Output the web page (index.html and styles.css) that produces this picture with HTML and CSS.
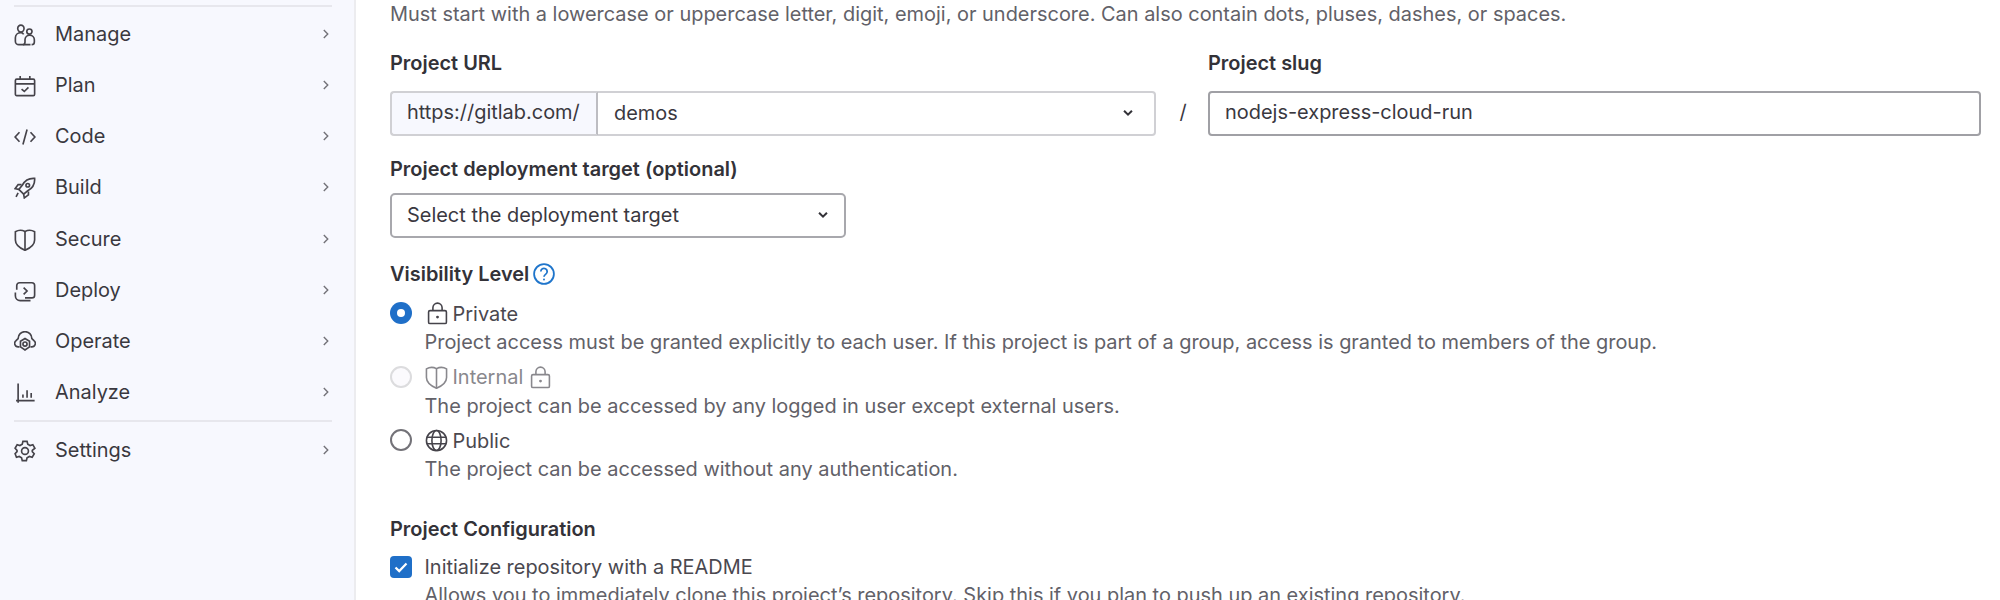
FILE: index.html
```html
<!DOCTYPE html>
<html lang="en">
<head>
<meta charset="utf-8">
<title>New project</title>
<link rel="stylesheet" href="styles.css">
</head>
<body>
<div class="page">
  <aside class="sidebar">
    <hr class="rule first">
    <nav class="nav">
      <a class="item"><svg class="ic" viewBox="0 0 16 16"><ellipse cx="5" cy="3.300" rx="2.300" ry="2.500"/><path d="M7 7.500C6.400 6.500 5.800 6.300 5 6.300c-2.200 0-4 1.500-4 3.700v2.500A2.500 2.500 0 0 0 3.500 15H12"/><circle cx="11.200" cy="5.500" r="1.900"/><path d="M6.500 15c1 0 1.500-1 1.500-2v-1.500a3.300 3.300 0 0 1 6.800 0V13a2 2 0 0 1-2 2"/></svg><span>Manage</span><svg class="chev" viewBox="0 0 16 16"><path d="M5.500 3.500 10 8l-4.500 4.500"/></svg></a>
      <a class="item"><svg class="ic" viewBox="0 0 16 16"><rect x="1" y="3" width="14" height="12" rx="1"/><path d="M1 6.500h14M4.500 .8V3M11.500 .8V3M5.500 10.300l2 1.700 3-3"/></svg><span>Plan</span><svg class="chev" viewBox="0 0 16 16"><path d="M5.500 3.500 10 8l-4.500 4.500"/></svg></a>
      <a class="item"><svg class="ic" viewBox="0 0 16 16"><path d="M4 4.500.8 8 4 11.500M12 4.500 15.200 8 12 11.500M9.500 2.500l-3 11"/></svg><span>Code</span><svg class="chev" viewBox="0 0 16 16"><path d="M5.500 3.500 10 8l-4.500 4.500"/></svg></a>
      <a class="item"><svg class="ic" viewBox="0 0 16 16"><path d="M15 1c-4-.3-7 1.300-9 5L3.500 9l3.500 3.500 3-2.500c3.700-2 5.300-5 5-9z"/><circle cx="10" cy="6" r="1.300"/><path d="M5.500 5.500H3L.8 8.500 3.500 9M10.500 10.500V13l-3 2.200L7 12.500M3 11.500l-1.500 3"/></svg><span>Build</span><svg class="chev" viewBox="0 0 16 16"><path d="M5.500 3.500 10 8l-4.500 4.500"/></svg></a>
      <a class="item"><svg class="ic" viewBox="0 0 16 16"><path d="M8 1.800C10 .8 13 .8 15 2v6c0 3.500-3.500 6-7 7.500C4.500 14 1 11.500 1 8V2c2-1.200 5-1.200 7-.2z"/><path d="M8 1.800v13.700"/></svg><span>Secure</span><svg class="chev" viewBox="0 0 16 16"><path d="M5.500 3.500 10 8l-4.500 4.500"/></svg></a>
      <a class="item"><svg class="ic" viewBox="0 0 16 16"><path d="M2 7V4a2 2 0 0 1 2-2h9a2 2 0 0 1 2 2v7a2 2 0 0 1-2 2H8"/><path d="M1 9v2.500C1 13.500 2.500 15 4.500 15H12"/><path d="M7 5.500 9.500 8 7 10.500"/></svg><span>Deploy</span><svg class="chev" viewBox="0 0 16 16"><path d="M5.500 3.500 10 8l-4.500 4.500"/></svg></a>
      <a class="item"><svg class="ic" viewBox="0 0 16 16"><path d="M4 11.500H3a2.500 2.500 0 0 1-1.500-4.500L3 5.500a5 5 0 0 1 10 0L14.500 7A2.500 2.500 0 0 1 13 11.500h-1"/><circle cx="8" cy="9.500" r="1.500"/><path d="M8 5.500l3.300 2v4L8 13.800l-3.300-2.300v-4z"/></svg><span>Operate</span><svg class="chev" viewBox="0 0 16 16"><path d="M5.500 3.500 10 8l-4.500 4.500"/></svg></a>
      <a class="item"><svg class="ic" viewBox="0 0 16 16"><path d="M1.500 13.500H15M3 1v14M6.500 9v2.500M9.500 6v5.500M12.500 8v3.500"/></svg><span>Analyze</span><svg class="chev" viewBox="0 0 16 16"><path d="M5.500 3.500 10 8l-4.500 4.500"/></svg></a>
    </nav>
    <hr class="rule second">
    <a class="item"><svg class="ic" viewBox="0 0 16 16"><path d="M6.500 1h3l.5 2 1.700 1 2-.6 1.500 2.600L13.300 7.500v1L14.700 10l-1.500 2.600-2-.6-1.700 1-.5 2h-3l-.5-2-1.700-1-2 .6L.8 10l1.400-1.500v-1L.8 6l1.500-2.600 2 .6L6 3z"/><circle cx="8" cy="8" r="2.500"/></svg><span>Settings</span><svg class="chev" viewBox="0 0 16 16"><path d="M5.500 3.500 10 8l-4.500 4.500"/></svg></a>
  </aside>
  <main class="main">
    <p class="help top">Must start with a lowercase or uppercase letter, digit, emoji, or underscore. Can also contain dots, pluses, dashes, or spaces.</p>
    <div class="url-row">
      <div class="url-col">
        <label class="label">Project URL</label>
        <div class="group">
          <span class="addon">https://gitlab.com/</span>
          <span class="select joined"><span>demos</span><svg class="down" viewBox="0 0 16 16"><path d="M4.500 6 8 9.500 11.500 6"/></svg></span>
        </div>
      </div>
      <span class="slash">/</span>
      <div class="slug-col">
        <label class="label">Project slug</label>
        <div class="input">nodejs-express-cloud-run</div>
      </div>
    </div>
    <label class="label target-label">Project deployment target (optional)</label>
    <div class="select target"><span>Select the deployment target</span><svg class="down" viewBox="0 0 16 16"><path d="M4.500 6 8 9.500 11.500 6"/></svg></div>
    <div class="label vis-label">Visibility Level<svg class="q" viewBox="0 0 16 16"><circle cx="8" cy="8" r="7.200"/><path d="M5.700 6.200a2.300 2.300 0 1 1 3.600 1.900C8.500 8.700 8 9.100 8 10"/><circle class="dot" cx="8" cy="12" r=".7"/></svg></div>
    <div class="option">
      <span class="radio on"></span>
      <div class="opt-body">
        <div class="opt-title"><svg class="oi lock" viewBox="0 0 16 16"><rect x="1.800" y="6" width="12.400" height="9" rx="1"/><path d="M4.800 6V4a3.200 3.200 0 0 1 6.400 0v2"/><circle class="dot" cx="8" cy="10.500" r="1"/></svg>Private</div>
        <p class="help">Project access must be granted explicitly to each user. If this project is part of a group, access is granted to members of the group.</p>
      </div>
    </div>
    <div class="option">
      <span class="radio off"></span>
      <div class="opt-body">
        <div class="opt-title muted"><svg class="oi" viewBox="0 0 16 16"><path d="M8 1.800C10 .8 13 .8 15 2v6c0 3.500-3.500 6-7 7.500C4.500 14 1 11.500 1 8V2c2-1.200 5-1.200 7-.2z"/><path d="M8 1.800v13.700"/></svg>Internal<svg class="oi after" viewBox="0 0 16 16"><rect x="1.800" y="6" width="12.400" height="9" rx="1"/><path d="M4.800 6V4a3.200 3.200 0 0 1 6.400 0v2"/><circle class="dot" cx="8" cy="10.500" r="1"/></svg></div>
        <p class="help">The project can be accessed by any logged in user except external users.</p>
      </div>
    </div>
    <div class="option">
      <span class="radio"></span>
      <div class="opt-body">
        <div class="opt-title"><svg class="oi" viewBox="0 0 16 16"><circle cx="8" cy="8" r="7"/><ellipse cx="8" cy="8" rx="3.200" ry="7"/><path d="M1.300 5.700h13.400M1.300 10.300h13.400"/></svg>Public</div>
        <p class="help">The project can be accessed without any authentication.</p>
      </div>
    </div>
    <div class="label conf-label">Project Configuration</div>
    <div class="option check-opt">
      <span class="check"><svg viewBox="0 0 16 16"><path d="M4 8.300l2.700 2.700L12 5.500"/></svg></span>
      <div class="opt-body">
        <div class="opt-title">Initialize repository with a README</div>
        <p class="help">Allows you to immediately clone this project’s repository. Skip this if you plan to push up an existing repository.</p>
      </div>
    </div>
  </main>
</div>
</body>
</html>
```
FILE: styles.css
```css
* { box-sizing: border-box; }
html, body { margin: 0; height: 600px; overflow: hidden; background: #fff; }
body { font-family: Inter, "Liberation Sans", sans-serif; font-size: 19.950px; color: #3a383f; }
.page { display: flex; height: 600px; }
.sidebar { width: 356px; flex: none; background: #f7f8fe; border-right: 2px solid #ececef; padding: 5px 0 0 14px; }
.rule { border: 0; height: 2px; background: #e7e7ed; margin: 0; width: 318px; }
.rule.first { margin-bottom: 1.400px; }
.nav { display: flex; flex-direction: column; }
.rule.second { margin: 2.500px 0 2px; }
.item { display: flex; align-items: center; width: 318px; height: 51px; color: #3a383f; flex: none; }
.nav .item { margin-bottom: .2px; }
.item span { flex: 1; margin-left: 19px; line-height: 24px; }
.ic { width: 22px; height: 22px; fill: none; stroke: #45434a; stroke-width: 1.200; flex: none; margin-top: 2px; }
.chev { width: 14px; height: 14px; fill: none; stroke: #737278; stroke-width: 1.600; flex: none; margin-right: -1px; }
.main { flex: 1; padding-left: 34px; padding-right: 19px; }
.help { margin: 0; color: #626168; line-height: 24px; }
.help.top { margin-top: 2px; height: 24px; }
.label { display: block; font-weight: 600; color: #333238; line-height: 24px; }
.url-row { display: flex; margin-top: 25px; }
.url-col { width: 766px; flex: none; }
.slash { width: 52px; flex: none; text-align: center; margin-top: 40px; padding-left: 2px; line-height: 43px; color: #3a383f; }
.slug-col { flex: 1; }
.group { display: flex; height: 45px; margin-top: 16px; }
.addon { width: 208px; flex: none; padding-left: 15px; background: #f7f8fe; border: 2px solid #d0d0d4; border-right-color: #bdbdc2; border-radius: 4px 0 0 4px; line-height: 39px; color: #3a383f; }
.select { display: flex; align-items: center; justify-content: space-between; height: 45px; padding: 0 12px 2px 15px; background: #fff; border: 2px solid #a8a8ad; border-radius: 5px; color: #3a383f; }
.select.joined { flex: 1; border: 2px solid #d0d0d4; border-left: 0; border-radius: 0 4px 4px 0; padding-left: 16px; padding-right: 17px; }
.down { width: 18px; height: 18px; fill: none; stroke: #333238; stroke-width: 1.800; }
.input { height: 45px; margin-top: 16px; padding: 0 15px; border: 2px solid #a0a0a5; border-radius: 4px; line-height: 39px; color: #3a383f; }
.target-label { margin-top: 21px; }
.target { width: 456px; margin-top: 12px; }
.vis-label { display: flex; align-items: center; gap: 4px; margin-top: 24px; }
.q { width: 22px; height: 22px; fill: none; stroke: #1f75cb; stroke-width: 1.300; }
.dot { fill: currentColor; stroke: none; }
.q .dot { fill: #1f75cb; }
.option { display: flex; margin-top: 9.500px; }
.vis-label + .option { margin-top: 14px; }
.radio { width: 22px; height: 22px; border-radius: 50%; border: 2px solid #737278; background: #fff; flex: none; margin-top: 2px; }
.radio.on { border: 0; background: #1f6fc8; position: relative; }
.radio.on::after { content: ""; position: absolute; left: 7px; top: 7px; width: 8px; height: 8px; border-radius: 50%; background: #fff; }
.radio.off { border-color: #dcdcde; background: #fbfafd; }
.opt-body { margin-left: 12.500px; flex: 1; }
.opt-title { display: flex; align-items: center; line-height: 24px; color: #4a484f; height: 27px; }
.opt-title.muted { color: #89888d; }
.oi { width: 23px; height: 23px; fill: none; stroke: #45434a; stroke-width: 1.100; margin-right: 5px; color: #45434a; }
.oi.lock { margin-left: 1px; margin-right: 4px; }
.muted .oi { stroke: #89888d; color: #89888d; }
.oi.after { margin: 0 0 0 6px; }
.opt-body .help { height: 24px; margin-top: 3px; }
.conf-label { margin-top: 36px; }
.check-opt { margin-top: 12px; }
.check { width: 22px; height: 22px; border-radius: 4px; background: #1f6fc8; flex: none; margin-top: 3px; }
.check svg { display: block; width: 22px; height: 22px; fill: none; stroke: #fff; stroke-width: 1.600; }
```
